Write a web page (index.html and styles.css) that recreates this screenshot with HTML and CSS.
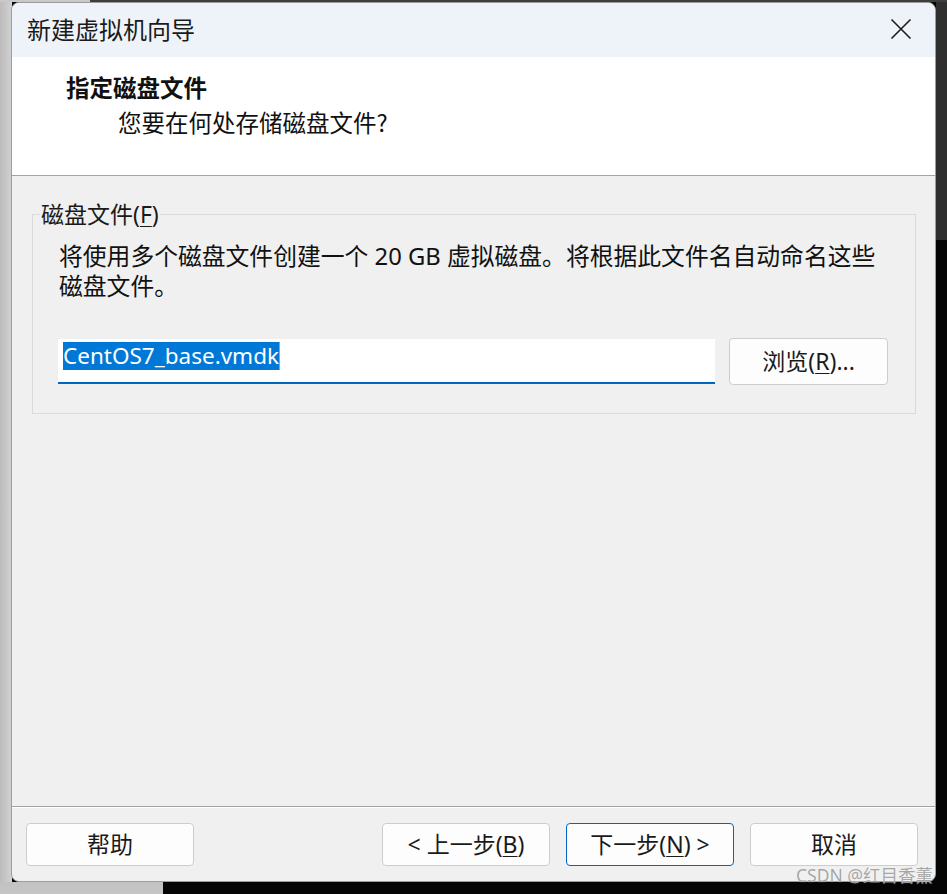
FILE: index.html
```html
<!DOCTYPE html>
<html lang="zh-CN">
<head>
<meta charset="utf-8">
<title>新建虚拟机向导</title>
<link rel="stylesheet" href="styles.css">
</head>
<body>
<div class="desk">
  <div class="window">
    <div class="titlebar">
      <span class="title">新建虚拟机向导</span>
      <svg class="close" width="22" height="22" viewBox="0 0 22 22"><path d="M1.5 1.5 L20.5 20.5 M20.5 1.5 L1.5 20.5" stroke="#1b1b1b" stroke-width="1.6" fill="none"/></svg>
    </div>
    <div class="header">
      <div class="h-title">指定磁盘文件</div>
      <div class="h-sub">您要在何处存储磁盘文件?</div>
    </div>
    <div class="content">
      <fieldset class="group">
        <legend class="legend">磁盘文件(<u>F</u>)</legend>
        <p class="desc">将使用多个磁盘文件创建一个 20 GB 虚拟磁盘。将根据此文件名自动命名这些磁盘文件。</p>
        <div class="file-row">
          <div class="input"><span class="sel">CentOS7_base.vmdk</span></div>
          <div class="btn browse">浏览(<u>R</u>)...</div>
        </div>
      </fieldset>
    </div>
    <div class="footer">
      <div class="btn">帮助</div>
      <div class="nav">
        <div class="btn">&lt; 上一步(<u>B</u>)</div>
        <div class="btn primary">下一步(<u>N</u>) &gt;</div>
        <div class="btn">取消</div>
      </div>
    </div>
  </div>
  <div class="watermark">CSDN @红目香薰</div>
</div>
</body>
</html>
```
FILE: styles.css
```css
html, body {
  margin: 0;
  padding: 0;
}
body {
  width: 947px;
  height: 894px;
  overflow: hidden;
  font-family: "Noto Sans", "Noto Sans CJK SC", sans-serif;
  background:
    linear-gradient(#c9c9c9, #c9c9c9) no-repeat 0 0 / 90px 2px,
    linear-gradient(#c2c2c2, #c6c6c6) no-repeat 0 882px / 163px 12px,
    linear-gradient(to right, #bcbcbc, #d2d2d2) no-repeat 0 0 / 12px 100%,
    linear-gradient(#3e3e3e, #3e3e3e) no-repeat 0 0 / 100% 2px,
    linear-gradient(#2f2f2f, #2f2f2f) no-repeat 936px 0 / 11px 240px,
    #050505;
}
.desk {
  position: relative;
  height: 894px;
  box-sizing: border-box;
  padding: 2px 0 0 11px;
}
.window {
  width: 925px;
  height: 880px;
  box-sizing: border-box;
  border: 1px solid #9c9c9c;
  border-radius: 8px;
  overflow: hidden;
  background: #f0f0f0;
  display: flex;
  flex-direction: column;
}
.titlebar {
  height: 54px;
  flex: none;
  background: #eef3f9;
  display: flex;
  align-items: center;
  justify-content: space-between;
  padding: 0 23px 0 15px;
}
.title {
  font-family: "Noto Sans CJK SC", sans-serif;
  font-size: 24px;
  color: #1a1a1a;
  position: relative;
  top: -2px;
}
.close {
  position: relative;
  top: -1px;
}
.header {
  height: 119px;
  flex: none;
  background: #ffffff;
  border-bottom: 1px solid #a3a3a3;
  box-sizing: border-box;
  padding: 13px 0 0 54px;
  font-family: "Noto Sans CJK SC", sans-serif;
  color: #111;
}
.h-title {
  font-size: 23.5px;
  font-weight: 700;
  line-height: 34px;
}
.h-sub {
  font-size: 23.5px;
  line-height: 36px;
  padding-left: 52px;
}
.content {
  flex: 1;
  padding: 25px 19px 0 20px;
}
.group {
  margin: 0;
  min-width: 0;
  border: 1px solid #dadada;
  padding: 0 27px 28px 25px;
  box-sizing: border-box;
}
.legend {
  font-family: "Noto Sans", "Noto Sans CJK SC", sans-serif;
  font-size: 23px;
  color: #1a1a1a;
  padding: 0 1px;
  margin-left: -18px;
  line-height: 26px;
}
.desc {
  margin: 14px 0 0 1px;
  font-size: 23.8px;
  line-height: 30px;
  color: #111;
}
.file-row {
  display: flex;
  gap: 14px;
  margin-top: 37px;
  align-items: center;
}
.input {
  width: 658px;
  height: 45px;
  box-sizing: border-box;
  background: #fff;
  border-bottom: 2px solid #0067c0;
  padding: 3px 0 0 5px;
}
.sel {
  display: inline-block;
  background: #0078d7;
  color: #fff;
  font-family: "Noto Sans", sans-serif;
  font-size: 22.5px;
  line-height: 28px;
  height: 28px;
  border-right: 1px solid #ff8a1c;
}
.btn {
  width: 168px;
  height: 43px;
  box-sizing: border-box;
  background: #fdfdfd;
  border: 1px solid #cdcdcd;
  border-radius: 4px;
  display: flex;
  align-items: center;
  justify-content: center;
  font-size: 23px;
  color: #1a1a1a;
  line-height: 1;
}
.browse {
  width: 159px;
  height: 47px;
}
.footer {
  flex: none;
  height: 75px;
  border-top: 1px solid #a3a3a3;
  box-shadow: inset 0 1px 0 #ffffff;
  box-sizing: border-box;
  padding: 16px 17px 0 14px;
  display: flex;
  justify-content: space-between;
  align-items: flex-start;
}
.nav {
  display: flex;
  gap: 16px;
}
.primary {
  border-color: #0067c0;
}
u {
  text-decoration: underline;
  text-underline-offset: 3px;
  text-decoration-thickness: 1px;
}
.watermark {
  position: absolute;
  right: 14px;
  top: 864px;
  font-family: "Noto Sans", "Noto Sans CJK SC", sans-serif;
  font-size: 17.5px;
  line-height: 22px;
  color: rgba(150, 150, 150, 0.85);
  text-shadow: 0 0 1px rgba(255,255,255,0.8);
  white-space: nowrap;
}
```
